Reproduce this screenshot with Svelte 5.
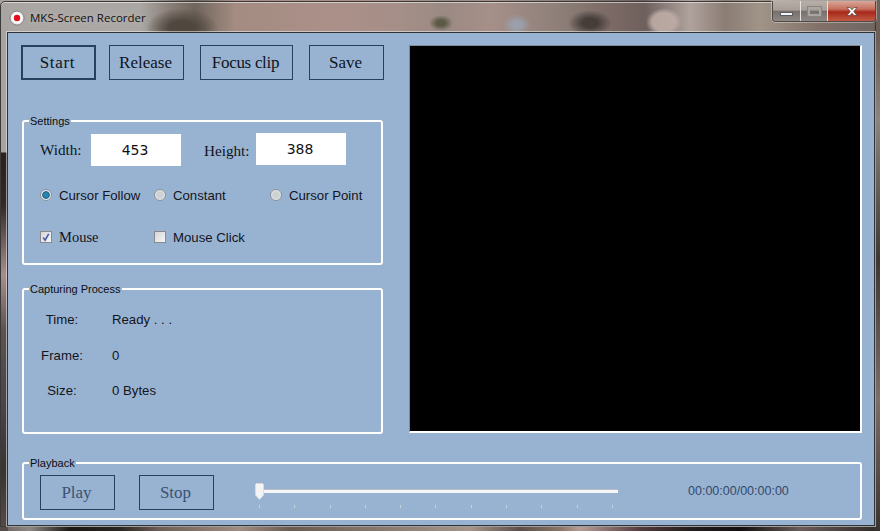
<script>
	const ticks = Array.from({ length: 11 }, (_, i) => i);
</script>

<div class="desktop">
	<div class="frame">
		<div class="titlebar">
			<svg class="app-icon" width="16" height="16" viewBox="0 0 16 16">
				<circle cx="8" cy="8" r="7" fill="#eceaea" stroke="#77716f" stroke-width="0.8" />
				<circle cx="8" cy="8" r="5.2" fill="#fff" />
				<circle cx="8" cy="8" r="3.2" fill="#e2101a" />
			</svg>
			<span class="app-title">MKS-Screen Recorder</span>
		</div>

		<div class="caption">
			<div class="cap min"><span class="min-glyph"></span></div>
			<div class="cap max"><span class="max-glyph"></span></div>
			<div class="cap close">
				<svg width="16" height="11" viewBox="0 0 16 11">
					<path d="M3 1.5h3l2 2.2 2-2.2h3L9.8 5.5 13 9.5h-3L8 7.3 6 9.5H3l3.2-4z" fill="#f4f6f8" stroke="#5a3c3c" stroke-width="0.7" />
				</svg>
			</div>
		</div>

		<div class="client">
			<div class="top">
				<div class="left">
					<div class="actions">
						<button class="btn default">Start</button>
						<button class="btn">Release</button>
						<button class="btn focus">Focus clip</button>
						<button class="btn save">Save</button>
					</div>

					<fieldset class="group settings">
						<legend>Settings</legend>
						<div class="size-row">
							<label class="serif-label" for="w">Width:</label>
							<input id="w" class="num" value="453" />
							<label class="serif-label height-label" for="h">Height:</label>
							<input id="h" class="num tall" value="388" />
						</div>
						<div class="options">
							<div class="opt"><span class="radio on"></span>Cursor Follow</div>
							<div class="opt"><span class="radio"></span>Constant</div>
							<div class="opt"><span class="radio"></span>Cursor Point</div>
						</div>
						<div class="options checks">
							<div class="opt serif">
								<span class="check">
									<svg width="11" height="11" viewBox="0 0 11 11">
										<path d="M2.500 5.500l2 3 4-7" fill="none" stroke="#4a5aa8" stroke-width="1.7" />
									</svg>
								</span>Mouse
							</div>
							<div class="opt"><span class="check"></span>Mouse Click</div>
						</div>
					</fieldset>

					<fieldset class="group capture">
						<legend>Capturing Process</legend>
						<div class="stats">
							<span>Time:</span><span>Ready . . .</span>
							<span>Frame:</span><span>0</span>
							<span>Size:</span><span>0 Bytes</span>
						</div>
					</fieldset>
				</div>

				<div class="video"></div>
			</div>

			<fieldset class="group playback">
				<legend>Playback</legend>
				<div class="play-row">
					<button class="btn muted">Play</button>
					<button class="btn muted">Stop</button>
					<div class="slider">
						<div class="track"></div>
						<svg class="thumb" width="9" height="17" viewBox="0 0 9 17">
							<path d="M1.500 .5h6l1 1v10.500l-4 4.500-4-4.500V1.500z" fill="#f4f4f4" stroke="#d8dde4" stroke-width="0.8" />
						</svg>
						<div class="ticks">
							{#each ticks as t (t)}
								<i></i>
							{/each}
						</div>
					</div>
					<span class="clock">00:00:00/00:00:00</span>
				</div>
			</fieldset>
		</div>
	</div>
</div>

<style>
	:global(body) {
		margin: 0;
		overflow: hidden;
	}

	.desktop {
		width: 880px;
		height: 531px;
		box-sizing: border-box;
		padding-top: 1px;
		background:
			radial-gradient(ellipse 12px 8px at 441px 23px, rgba(85, 83, 63, 0.9) 0 35%, transparent 100%),
			radial-gradient(ellipse 14px 11px at 517px 25px, rgba(154, 163, 176, 0.9) 0 30%, transparent 100%),
			radial-gradient(ellipse 22px 13px at 590px 23px, rgba(63, 55, 52, 0.9) 0 35%, transparent 100%),
			radial-gradient(ellipse 18px 14px at 664px 22px, rgba(190, 172, 166, 0.9) 0 65%, transparent 100%),
			radial-gradient(ellipse 36px 20px at 182px 28px, #50473f 0 35%, transparent 100%),
			linear-gradient(180deg, #a7a4a2 0 152px, #2a201c 153px, #342a28 205px, #a88f8b 275px, #5d5250 330px, #4b4648 400px, #3a3432 470px, #574c48 531px) 0 0 / 8px 531px no-repeat,
			linear-gradient(180deg, #6e6058 0 40px, #8b8580 120px, #3d3735 260px, #7d6f6a 400px, #38322f 531px) 874px 0 / 6px 531px no-repeat,
			linear-gradient(90deg, #6a625e 0, #8e8782 30px, #1b1714 70px, #2c2522 120px, #6f5f57 160px, #a08c80 240px, #6b5c52 290px, #8d7f76 400px, #a69588 470px, #5c4f4a 520px, #8b7565 560px, #b79d95 580px, #553a3f 640px, #241d1d 690px, #120f10 740px, #6a5c58 800px, #2f2a28 880px) 0 526px / 880px 5px no-repeat,
			linear-gradient(90deg, #a9a6a4 0, #aaa7a4 140px, #8a7f78 170px, #6f655c 195px, #a48c82 235px, #ab9089 330px, #a58f88 400px, #9a8a83 445px, #a68f89 490px, #8d7f78 560px, #7c6a65 610px, #6e605d 645px, #b0a29d 690px, #8b7c74 725px, #a09488 760px, #807068 820px, #6e6662 880px);
	}

	.frame {
		position: relative;
		width: 876px;
		height: 526px;
		box-sizing: border-box;
		border: 1px solid #3a3a3a;
		box-shadow: inset 0 1px 0 rgba(255, 255, 255, 0.55);
		border-radius: 5px 5px 0 0;
		padding: 0 0 0 6px;
		display: flex;
		flex-direction: column;
	}

	.titlebar {
		height: 29px;
		padding-top: 1px;
		margin-left: -6px;
		padding-left: 8px;
		display: flex;
		align-items: center;
		gap: 5px;
		flex: none;
	}

	.app-title {
		font: 11.5px "Open Sans", "Liberation Sans", sans-serif;
		color: #14100e;
		text-shadow: 0 0 6px rgba(255, 255, 255, 0.35);
	}

	.caption {
		position: absolute;
		top: -1px;
		right: -1px;
		width: 104px;
		height: 21px;
		display: flex;
		border: 1px solid #4e4a48;
		border-top: none;
		border-radius: 0 0 4px 4px;
		box-sizing: border-box;
		overflow: hidden;
		box-shadow: 0 0 0 1px rgba(255, 255, 255, 0.35);
	}

	.cap {
		display: flex;
		align-items: center;
		justify-content: center;
		box-sizing: border-box;
		background: linear-gradient(180deg, #b8aea8 0, #a89e98 45%, #78706c 52%, #8f8783 100%);
		border-right: 1px solid #e6e2e0;
	}

	.min {
		width: 28px;
	}

	.max {
		width: 27px;
	}

	.close {
		flex: 1;
		border-right: none;
		background: linear-gradient(180deg, #d8a79a 0, #c76f5e 40%, #a8281a 55%, #c25a44 100%);
	}

	.min-glyph {
		width: 11px;
		height: 2px;
		margin-top: 6px;
		background: #f2f4f8;
		border: 1px solid #5b5b66;
	}

	.max-glyph {
		width: 9px;
		height: 5px;
		border: 2px solid #a9a5a3;
		outline: 1px solid #8a8482;
	}

	.client {
		width: 868px;
		height: 494px;
		box-sizing: border-box;
		border: 1px solid #2f3236;
		background: #98b3d1;
		padding: 12px 0 0 13px;
		outline: 1px solid rgba(240, 240, 240, 0.55);
	}

	.top {
		display: flex;
		gap: 25px;
	}

	.left {
		width: 363px;
	}

	.actions {
		display: flex;
		gap: 13px;
	}

	.btn {
		width: 75px;
		height: 35px;
		padding: 0 2px 0 0;
		flex: none;
		background: transparent;
		border: 1px solid #24415f;
		font: 17px "Liberation Serif", serif;
		color: #10141c;
	}

	.default {
		border-width: 2px;
		letter-spacing: 0.7px;
	}

	.focus {
		width: 93px;
		margin-left: 3px;
		letter-spacing: -0.3px;
	}

	.save {
		margin-left: 3px;
	}

	.muted {
		color: #3a5273;
	}

	.group {
		margin: 0 0 0 1px;
		padding: 0;
		width: 361px;
		box-sizing: border-box;
		border: 2px solid #fff;
		border-radius: 3px;
		font: 13.2px "Liberation Sans", sans-serif;
		color: #14141c;
		min-width: 0;
	}

	legend {
		font: 11px "Liberation Sans", sans-serif;
		color: #0c0c10;
		padding: 0 1px;
		margin-left: 5px;
	}

	.settings {
		margin-top: 35px;
		height: 150px;
	}

	.size-row {
		display: flex;
		align-items: center;
		margin-top: 7px;
		padding-left: 16px;
	}

	.serif-label {
		font: 15.2px "Liberation Serif", serif;
		color: #10141c;
		width: 51px;
		flex: none;
	}

	.height-label {
		margin-left: 23px;
		width: 52px;
		position: relative;
		top: 1px;
	}

	.num {
		width: 90px;
		height: 32px;
		box-sizing: border-box;
		border: none;
		background: #fff;
		text-align: center;
		font: 14px "DejaVu Sans", sans-serif;
		color: #101018;
		padding: 0 2px 0 0;
		flex: none;
		outline: none;
	}

	.tall {
		position: relative;
		top: -1px;
	}

	.options {
		display: grid;
		grid-template-columns: 114px 116px auto;
		margin-top: 21px;
		padding-left: 16px;
	}

	.checks {
		margin-top: 26px;
	}

	.opt {
		display: flex;
		align-items: center;
		height: 16px;
	}

	.serif {
		font-family: "Liberation Serif", serif;
		font-size: 14.5px;
	}

	.radio {
		width: 12px;
		height: 12px;
		border-radius: 50%;
		margin-right: 7px;
		box-sizing: border-box;
		border: 1px solid #8e9298;
		background: radial-gradient(circle at 50% 50%, #cfd2d4 0 45%, #eef0f2 80%);
		flex: none;
	}

	.radio.on {
		background: radial-gradient(circle at 50% 50%, #2a86b0 0 32%, #0e5a80 48%, #e4e8ea 58%);
	}

	.check {
		width: 12px;
		height: 12px;
		margin-right: 7px;
		box-sizing: border-box;
		border: 1px solid #8a8a8a;
		background: linear-gradient(135deg, #d4d6d8, #f6f6f6);
		display: flex;
		flex: none;
	}

	.capture {
		margin-top: 18px;
		height: 151px;
	}

	.stats {
		display: grid;
		grid-template-columns: 44px auto;
		column-gap: 28px;
		row-gap: 20px;
		padding: 17px 0 0 16px;
		line-height: 15.500px;
	}

	.stats span:nth-child(odd) {
		text-align: center;
	}

	.video {
		width: 453px;
		height: 388px;
		box-sizing: border-box;
		background: #000;
		border-style: solid;
		border-width: 1px 2px 2px 1px;
		border-color: #7f8a96 #fff #fff #7f8a96;
	}

	.playback {
		width: 840px;
		height: 63px;
		margin-top: 23px;
	}

	.play-row {
		display: flex;
		align-items: flex-start;
		padding: 6px 0 0 16px;
		gap: 24px;
	}

	.slider {
		position: relative;
		width: 363px;
		height: 30px;
		margin: 6px 0 0 17px;
		flex: none;
	}

	.track {
		margin: 8px 0 0 4px;
		height: 3px;
		background: #f4f5f6;
		border-top: 1px solid #b8bec4;
	}

	.thumb {
		position: absolute;
		left: 0;
		top: 2px;
	}

	.ticks {
		display: flex;
		justify-content: space-between;
		width: 354px;
		margin: 12px 0 0 4px;
	}

	.ticks i {
		width: 1px;
		height: 3px;
		background: #c8d2dc;
	}

	.clock {
		margin: 9px 0 0 46px;
		font: 12.5px "Liberation Sans", sans-serif;
		color: #34486c;
	}
</style>
